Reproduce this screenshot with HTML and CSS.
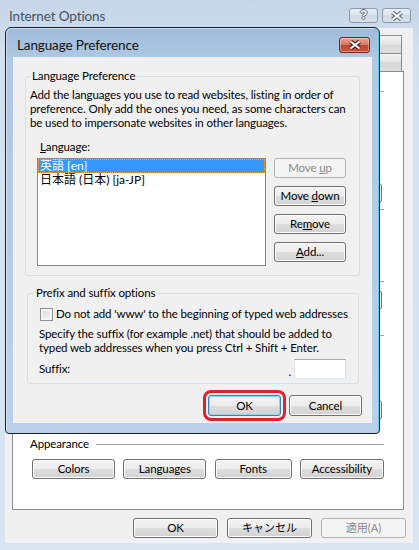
FILE: index.html
```html
<!DOCTYPE html>
<html lang="ja">
<head>
    <meta charset="UTF-8">
    <meta name="viewport" content="width=device-width, initial-scale=1.0">
    <title>Language Preference</title>
    <link rel="stylesheet" href="styles.css">
</head>
<body>

    <!-- Background window: Internet Options -->
    <div class="window">
        <div class="titlebar">
            <span class="title">Internet Options</span>
            <div class="caption-buttons">
                <span class="cap-btn cap-help">?</span>
                <span class="cap-btn">
                    <svg width="14" height="10" viewBox="0 0 14 10">
                        <path d="M2.5 1.5 L11.5 8.5 M11.5 1.5 L2.5 8.5" stroke="#66717d" stroke-width="4.2" fill="none"/>
                        <path d="M2.5 1.5 L11.5 8.5 M11.5 1.5 L2.5 8.5" stroke="#f7f9fb" stroke-width="2" fill="none"/>
                    </svg>
                </span>
            </div>
        </div>

        <div class="client">
            <div class="tab-row">
                <span class="tab">Connections</span>
                <span class="tab">Programs</span>
                <span class="tab">Advanced</span>
            </div>
            <div class="tab-row">
                <span class="tab">General</span>
                <span class="tab">Security</span>
                <span class="tab">Privacy</span>
                <span class="tab">Content</span>
            </div>

            <div class="panel">
                <div class="grp-head">Home page</div>
                <p class="grp-text">To create home page tabs, type each address on its own line.</p>
                <div class="home-box">http://www.msn.com/</div>
                <div class="btn-row">
                    <button class="btn btn-wide"><u>U</u>se current</button>
                    <button class="btn btn-wide">Use de<u>f</u>ault</button>
                    <button class="btn btn-wide">Use <u>n</u>ew tab</button>
                </div>

                <div class="grp-head">Startup</div>
                <div class="startup">
                    <div class="radio-line">Start with tabs from the last session</div>
                    <div class="radio-line">Start with home page</div>
                </div>

                <div class="grp-head">Tabs</div>
                <div class="tabs-line">
                    <span class="grp-text">Change how webpages are displayed in tabs.</span>
                    <button class="btn btn-tabs"><u>T</u>abs</button>
                </div>

                <div class="grp-head grp-history">Browsing history</div>
                <div class="history">
                    <p class="grp-text">Delete temporary files, history, cookies, saved passwords,<br>and web form information.</p>
                    <div class="radio-line">Delete browsing history on exit</div>
                </div>
                <div class="btn-row btn-row-history">
                    <button class="btn btn-wide"><u>D</u>elete...</button>
                    <button class="btn btn-wide"><u>S</u>ettings</button>
                </div>

                <div class="grp-head grp-appearance">Appearance</div>
                <div class="appearance-btns">
                    <button class="btn btn-colors">Colors</button>
                    <button class="btn btn-colors">Languages</button>
                    <button class="btn btn-fonts">Fonts</button>
                    <button class="btn btn-access">Accessibility</button>
                </div>
            </div>

            <div class="footer">
                <button class="btn btn-footer">OK</button>
                <button class="btn btn-footer btn-jp">キャンセル</button>
                <button class="btn btn-footer btn-jp" disabled>適用(A)</button>
            </div>
        </div>

        <!-- Modal: Language Preference -->
        <div class="dialog">
            <div class="dlg-title">
                <span class="dlg-caption">Language Preference</span>
                <span class="dlg-close">
                    <svg width="14" height="10" viewBox="0 0 14 10">
                        <path d="M2.5 1.5 L11.5 8.5 M11.5 1.5 L2.5 8.5" stroke="#5a1c12" stroke-width="4.4" fill="none"/>
                        <path d="M2.5 1.5 L11.5 8.5 M11.5 1.5 L2.5 8.5" stroke="#ffffff" stroke-width="2.2" fill="none"/>
                    </svg>
                </span>
            </div>

            <div class="dlg-client">
                <fieldset class="group group-lang">
                    <legend>Language Preference</legend>
                    <p class="help">Add the languages you use to read websites, listing in order of<br>preference. Only add the ones you need, as some characters can<br>be used to impersonate websites in other languages.</p>
                    <div class="lang-area">
                        <div class="lang-label"><u>L</u>anguage:</div>
                        <div class="lang-row">
                            <ul class="lang-list">
                                <li class="selected">英語 [en]</li>
                                <li>日本語 (日本) [ja-JP]</li>
                            </ul>
                            <div class="lang-btns">
                                <button class="btn btn-side" disabled>Move <u>u</u>p</button>
                                <button class="btn btn-side">Move <u>d</u>own</button>
                                <button class="btn btn-side">Re<u>m</u>ove</button>
                                <button class="btn btn-side"><u>A</u>dd...</button>
                            </div>
                        </div>
                    </div>
                </fieldset>

                <fieldset class="group group-suffix">
                    <legend>Prefix and suffix options</legend>
                    <div class="check-row">
                        <span class="check"></span>
                        <span>Do not add 'www' to the beginning of typed web addresses</span>
                    </div>
                    <p class="help suffix-help">Specify the suffix (for example .net) that should be added to<br>typed web addresses when you press Ctrl + Shift + Enter.</p>
                    <div class="suffix-row">
                        <span>Suffix:</span>
                        <span class="suffix-field">
                            <span class="dot">.</span>
                            <span class="textbox"></span>
                        </span>
                    </div>
                </fieldset>

                <div class="dlg-buttons">
                    <button class="btn btn-dlg btn-default">OK</button>
                    <button class="btn btn-dlg">Cancel</button>
                </div>
            </div>
        </div>
    </div>

</body>
</html>
```

FILE: styles.css
```css
/* General */
* {
    box-sizing: border-box;
}
body {
    margin: 0;
    font-family: Lato, "Noto Sans CJK JP", sans-serif;
    font-size: 11.5px;
    letter-spacing: -0.12px;
    color: #000;
}
p {
    margin: 0;
}
u {
    text-underline-offset: 1px;
}

/* Outer window (inactive) */
.window {
    position: relative;
    width: 419px;
    height: 550px;
    display: flex;
    flex-direction: column;
    background: linear-gradient(#c6d6e8, #d3e1ef 60px, #d8e5f2);
    overflow: hidden;
}
.titlebar {
    flex-shrink: 0;
    height: 28px;
    padding: 3px 8px 0 9px;
    display: flex;
    align-items: center;
    justify-content: space-between;
}
.title {
    font-size: 13.5px;
    color: #46525e;
}
.caption-buttons {
    display: flex;
    gap: 4px;
}
.cap-btn {
    width: 29px;
    height: 15px;
    border: 1px solid #8c9bad;
    border-radius: 3px;
    background: linear-gradient(#e6edf5, #dbe4ee 50%, #d0dbe7 50%, #d6e0ea);
    display: flex;
    align-items: center;
    justify-content: center;
}
.cap-help {
    font-family: "Liberation Sans", sans-serif;
    font-weight: bold;
    font-size: 12px;
    line-height: 13px;
    color: #f5f7f9;
    text-shadow: 1px 0 #66717d, -1px 0 #66717d, 0 1px #66717d, 0 -1px #66717d;
}

.client {
    flex: 1;
    min-height: 0;
    margin: 0 6px 7px 5px;
    padding: 7px 7px 0 7px;
    background-color: #f0f0f0;
    display: flex;
    flex-direction: column;
}

/* Tabs */
.tab-row {
    display: flex;
    flex-shrink: 0;
    height: 18px;
    margin-right: 4px;
}
.tab {
    flex: 1;
    border: 1px solid #898c95;
    border-bottom: none;
    margin-left: -1px;
    background: linear-gradient(#f3f3f3, #e3e3e3 50%, #d8d8d8 50%, #dedede);
    text-align: center;
    line-height: 17px;
}

/* Tab panel (General) */
.panel {
    flex-shrink: 0;
    height: 439px;
    margin-right: 2px;
    border: 1px solid #898c95;
    background-color: #fff;
    padding: 13px 19px 0 17px;
}
.grp-head {
    display: flex;
    align-items: center;
    gap: 7px;
    height: 12px;
    line-height: 12px;
}
.grp-head::after {
    content: "";
    flex: 1;
    border-top: 1px solid #a0a0a0;
}
.grp-text {
    line-height: 14px;
    white-space: nowrap;
    padding-left: 2px;
}
.panel > .grp-text {
    margin-top: 3px;
}
.home-box {
    height: 51px;
    margin: 7px 4px 0 2px;
    border: 1px solid #abadb3;
    padding: 2px 3px;
}
.btn-row {
    display: flex;
    justify-content: flex-end;
    gap: 7px;
    margin: 11px 2px 0 0;
}
.startup {
    height: 60px;
    padding: 8px 0 0 12px;
}
.radio-line {
    line-height: 20px;
}
.tabs-line {
    display: flex;
    justify-content: space-between;
    align-items: center;
    margin: 3px 2px 0 0;
}
.grp-history {
    margin-top: 19px;
}
.history {
    height: 59px;
    padding-top: 6px;
}
.history .radio-line {
    padding-left: 12px;
}
.btn-row-history {
    margin-top: 0;
}
.grp-appearance {
    margin-top: 18px;
}
.appearance-btns {
    display: flex;
    justify-content: space-between;
    margin: 9px 0 0 2px;
}

.footer {
    display: flex;
    justify-content: flex-end;
    gap: 9px;
    margin-top: 8px;
}

/* Buttons */
.btn {
    height: 20px;
    padding: 0;
    font: inherit;
    letter-spacing: inherit;
    line-height: 16px;
    color: #000;
    text-align: center;
    white-space: nowrap;
    border: 1px solid #707070;
    border-radius: 3px;
    background: linear-gradient(#f4f4f4, #ececec 50%, #dedede 50%, #d2d2d2);
    box-shadow: inset 0 0 0 1px #fbfbfb;
}
.btn:disabled {
    color: #8a8a8a;
    border-color: #adb2b5;
    background: #f4f4f4;
    box-shadow: none;
}
.btn-jp {
    font-size: 11px;
    letter-spacing: 0;
}
.btn-wide {
    width: 85px;
}
.btn-tabs {
    width: 75px;
}
.btn-colors {
    width: 83px;
}
.btn-fonts {
    width: 77px;
}
.btn-access {
    width: 84px;
}
.btn-footer {
    width: 85px;
}

/* Language Preference dialog */
.dialog {
    position: absolute;
    left: 5px;
    top: 27px;
    width: 375px;
    height: 407px;
    padding: 0 7px 10px;
    border: 1px solid #18212c;
    border-radius: 6px 6px 4px 4px;
    background: linear-gradient(#9ebbda, #b0c9e4 32px, #b9d1ea);
    box-shadow: inset -1px 0 #56d2ee, inset 1px 1px rgba(255, 255, 255, 0.45);
    display: flex;
    flex-direction: column;
}
.dlg-title {
    flex-shrink: 0;
    height: 29px;
    padding: 5px 2px 0 4px;
    display: flex;
    align-items: center;
    justify-content: space-between;
}
.dlg-caption {
    font-size: 13.5px;
    color: #111;
}
.dlg-close {
    width: 31px;
    height: 16px;
    border: 1px solid #6e2a20;
    border-radius: 3px;
    background: linear-gradient(#e9a899, #d47561 50%, #c2462f 50%, #c9553b);
    box-shadow: inset 0 0 0 1px rgba(255, 220, 210, 0.45);
    display: flex;
    align-items: center;
    justify-content: center;
}
.dlg-client {
    flex: 1;
    min-height: 0;
    padding-top: 12px;
    background-color: #f0f0f0;
}

/* Group boxes */
.group {
    margin: 0 12px;
    padding: 5px 13px 9px 4px;
    min-width: 0;
    border: 1px solid #d5dfe5;
    border-radius: 3px;
}
.group legend {
    padding: 0 2px;
    line-height: 14px;
}
.help {
    line-height: 14px;
    white-space: nowrap;
}
.lang-area {
    margin: 10px 0 0 7px;
}
.lang-label {
    line-height: 14px;
    padding-left: 3px;
}
.lang-row {
    display: flex;
    gap: 8px;
    margin-top: 4px;
}
.lang-list {
    width: 229px;
    height: 108px;
    margin: 0;
    padding: 0;
    list-style: none;
    border: 1px solid #828790;
    background-color: #fff;
    font-size: 12px;
    letter-spacing: 0;
}
.lang-list li {
    height: 14px;
    line-height: 14px;
    padding-left: 2px;
    white-space: nowrap;
}
.lang-list .selected {
    background-color: #3399ff;
    color: #fff;
    outline: 1px dotted #f3a53c;
    outline-offset: -1px;
}
.lang-btns {
    display: flex;
    flex-direction: column;
    gap: 8px;
}
.btn-side {
    width: 72px;
}

.group-suffix {
    margin: 10px 13px 0 14px;
    padding: 7px 12px 4px 6px;
}
.check-row {
    display: flex;
    align-items: center;
    gap: 3px;
    line-height: 14px;
    margin-left: 6px;
    white-space: nowrap;
}
.check {
    flex-shrink: 0;
    width: 13px;
    height: 13px;
    border: 1px solid #8e8f8f;
    background: linear-gradient(135deg, #d8d8d8, #f7f7f7);
    box-shadow: inset 0 0 0 2px #f4f4f4;
}
.suffix-help {
    margin: 6px 0 0 5px;
    line-height: 13.5px;
}
.suffix-row {
    display: flex;
    justify-content: space-between;
    align-items: center;
    margin: 5px 0 0 5px;
    line-height: 14px;
}
.suffix-field {
    display: flex;
    gap: 3px;
    align-items: flex-end;
    height: 20px;
}
.textbox {
    width: 52px;
    height: 20px;
    border: 1px solid #abadb3;
    border-color: #abadb3 #dbdfe6 #e3e9ef #e2e3ea;
    background-color: #fff;
}

.dlg-buttons {
    display: flex;
    justify-content: flex-end;
    gap: 8px;
    margin: 11px 10px 0 0;
}
.btn-dlg {
    width: 73px;
    height: 21px;
}
.btn-default {
    border-color: #3c7fb1;
    box-shadow: inset 0 0 0 1px #8ad8f8;
    outline: 3px solid #e3212b;
    outline-offset: 2px;
}
```
